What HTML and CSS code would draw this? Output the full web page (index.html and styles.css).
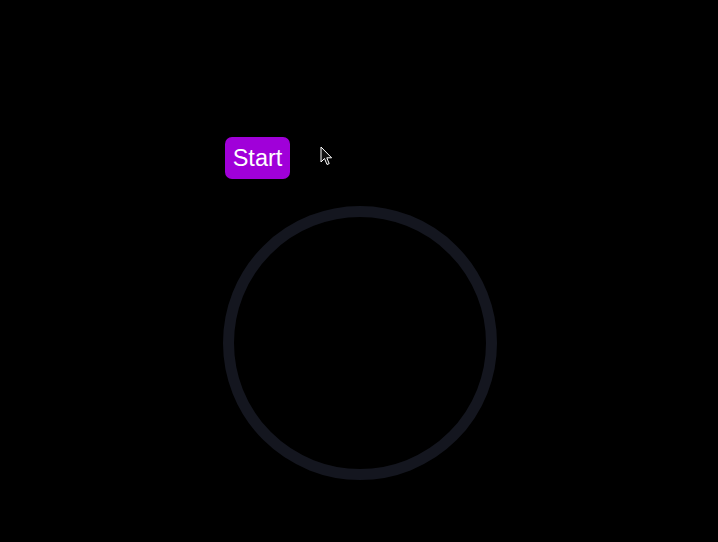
FILE: index.html
```html
<!DOCTYPE html>
<html>
<head>
<meta charset="utf-8">
<link rel="stylesheet" href="styles.css">
</head>
<body>
<main class="stage">
  <div class="controls">
    <button class="start-btn">Start</button>
  </div>
  <div class="ring"></div>
</main>
<svg class="cursor" width="14" height="22" viewBox="0 0 14 22">
  <path d="M1 1 L1 16 L4.5 12.5 L7 18.5 L9.2 17.6 L6.8 11.8 L11.6 11.8 Z" fill="#111" stroke="#fff" stroke-width="1" stroke-linejoin="miter"/>
</svg>
</body>
</html>
```

FILE: styles.css
```css
html, body {
  margin: 0;
  padding: 0;
  background: #000;
  width: 718px;
  height: 542px;
  overflow: hidden;
}

.stage {
  display: flex;
  flex-direction: column;
  align-items: flex-start;
  padding: 137px 0 0 223px;
  gap: 27px;
}

.controls {
  display: flex;
  padding-left: 2px;
}

.start-btn {
  box-sizing: border-box;
  width: 65px;
  height: 42px;
  padding: 0;
  border: none;
  border-radius: 7px;
  background: #a000d9;
  color: #fff;
  font-family: "Liberation Sans", Arial, sans-serif;
  font-size: 23.5px;
  line-height: 42px;
  cursor: pointer;
}

.ring {
  box-sizing: border-box;
  width: 274px;
  height: 274px;
  border: 11px solid #14161f;
  border-radius: 50%;
}

.cursor {
  position: absolute;
  left: 320px;
  top: 146px;
}
```
